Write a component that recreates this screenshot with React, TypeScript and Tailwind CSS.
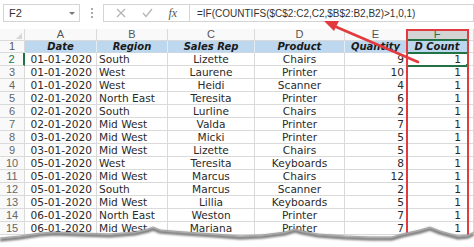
import React from "react";

const rows: [string, string, string, string, string, number, number][] = [
  ["2", "01-01-2020", "South", "Lizette", "Chairs", 9, 1],
  ["3", "01-01-2020", "West", "Laurene", "Printer", 10, 1],
  ["4", "01-01-2020", "West", "Heidi", "Scanner", 4, 1],
  ["5", "02-01-2020", "North East", "Teresita", "Printer", 6, 1],
  ["6", "02-01-2020", "South", "Lurline", "Chairs", 2, 1],
  ["7", "02-01-2020", "Mid West", "Valda", "Printer", 7, 1],
  ["8", "03-01-2020", "Mid West", "Micki", "Printer", 5, 1],
  ["9", "03-01-2020", "Mid West", "Lizette", "Chairs", 5, 1],
  ["10", "05-01-2020", "West", "Teresita", "Keyboards", 8, 1],
  ["11", "05-01-2020", "Mid West", "Marcus", "Chairs", 12, 1],
  ["12", "05-01-2020", "South", "Marcus", "Scanner", 2, 1],
  ["13", "05-01-2020", "Mid West", "Lillia", "Keyboards", 5, 1],
  ["14", "06-01-2020", "North East", "Weston", "Printer", 7, 1],
  ["15", "06-01-2020", "Mid West", "Mariana", "Printer", 7, 1],
];

const gridCols = "grid grid-cols-[25px_72px_71px_87px_90px_62px_61px_6px]";
const cell = "border-r border-b border-[#dadada] flex items-center whitespace-nowrap overflow-hidden";

const edge =
  "M0 238 L20 236 L40 233 L55 232 L80 233 L110 234 L135 232 L148 229 L153 227 L160 230 L185 232 L215 234 L240 236 L262 235 L285 232 L295 229 L302 231 L318 234 L345 236 L370 237 L392 237 L402 234 L420 230 L430 227 L440 231 L458 236 L468 235 L474 232";

export default function App() {
  return (
    <div className="relative w-[474px] h-[247px] overflow-hidden bg-white text-[#2a2a2a] font-['DejaVu_Sans',sans-serif]">
      {/* formula bar */}
      <div className="flex items-start h-[29px] pt-[4px] font-['Liberation_Sans',Arial,sans-serif]">
        <div className="ml-[3px] w-[77px] h-[18px] border border-[#d4d4d4] flex items-center justify-between pl-[5px] pr-[4px] text-[11px] text-[#333]">
          <span>F2</span>
          <span className="w-0 h-0 border-l-[3px] border-r-[3px] border-t-[3px] border-l-transparent border-r-transparent border-t-[#777]" />
        </div>
        <div className="w-[23px] h-[18px] flex flex-col items-center justify-center gap-[2px]">
          <span className="w-[2px] h-[2px] bg-[#aaa]" />
          <span className="w-[2px] h-[2px] bg-[#aaa]" />
          <span className="w-[2px] h-[2px] bg-[#aaa]" />
        </div>
        <div className="w-[87px] h-[18px] border border-[#d4d4d4] flex items-center justify-around px-[4px]">
          <svg width="10" height="10" viewBox="0 0 10 10">
            <path d="M1 1 L9 9 M9 1 L1 9" stroke="#b5b5b5" strokeWidth="1.3" />
          </svg>
          <svg width="11" height="10" viewBox="0 0 11 10">
            <path d="M1 5 L4 8.5 L10 1" stroke="#b5b5b5" strokeWidth="1.3" fill="none" />
          </svg>
          <span className="text-[12px] italic text-[#555] font-['Liberation_Serif',serif]">fx</span>
        </div>
        <div className="flex-1 h-[18px] border border-l-0 border-[#d4d4d4] flex items-center pl-[7px] text-[10px] text-[#333]">
          =IF(COUNTIFS($C$2:C2,C2,$B$2:B2,B2)&gt;1,0,1)
        </div>
      </div>

      {/* column headers */}
      <div className={`${gridCols} h-[12px] text-[11px] text-[#555] font-['Liberation_Sans',Arial,sans-serif] leading-none`}>
        <div className={`${cell} bg-[#f9f9f9] justify-end items-end pr-[2px] pb-[1px]`}>
          <span className="w-0 h-0 border-l-[6px] border-t-[6px] border-l-transparent border-t-transparent border-b-0 border-r-0 [border-right:6px_solid_#d6d6d6]" />
        </div>
        {["A", "B", "C", "D", "E"].map((c) => (
          <div key={c} className={`${cell} bg-[#f9f9f9] justify-center`}>{c}</div>
        ))}
        <div className={`${cell} bg-[#d4d4d4] justify-center text-[#217346] border-b-2 border-b-[#217346]`}>F</div>
        <div className={`${cell} bg-[#f9f9f9]`} />
      </div>

      {/* row 1 headers */}
      <div className={`${gridCols} h-[12px] text-[10px] font-bold italic leading-none`}>
        <div className={`${cell} bg-[#f9f9f9] justify-center not-italic font-normal text-[11px] text-[#555] font-['Liberation_Sans',Arial,sans-serif]`}>1</div>
        {["Date", "Region", "Sales Rep", "Product", "Quantity", "D Count"].map((h) => (
          <div key={h} className={`${cell} bg-[#bdd7ee] border-[#e4edf6] border-b-[#c9d6e3] justify-center text-[#1a1a1a]`}>{h}</div>
        ))}
        <div className={cell} />
      </div>

      {/* data rows */}
      {rows.map((r, i) => (
        <div key={r[0]} className={`${gridCols} h-[13px] text-[10.6px] leading-none`}>
          <div
            className={`${cell} bg-[#f9f9f9] justify-center text-[11px] font-['Liberation_Sans',Arial,sans-serif] ${
              i === 0 ? "text-[#217346] bg-[#e2e2e2] border-r-2 border-r-[#217346]" : "text-[#666]"
            }`}
          >
            {r[0]}
          </div>
          <div className={`${cell} justify-end pr-[4px]`}>{r[1]}</div>
          <div className={`${cell} pl-[2px]`}>{r[2]}</div>
          <div className={`${cell} justify-center`}>{r[3]}</div>
          <div className={`${cell} justify-center`}>{r[4]}</div>
          <div className={`${cell} justify-end pr-[2px]`}>{r[5]}</div>
          <div className={`${cell} justify-end pr-[6px] ${i === 0 ? "relative outline-2 outline-[#217346] -outline-offset-1" : ""}`}>
            {r[6]}
            {i === 0 && <span className="absolute right-[-2px] bottom-[-2px] w-[4px] h-[4px] bg-[#217346] border border-white" />}
          </div>
          <div className={cell} />
        </div>
      ))}

      {/* red highlight around column F */}
      <div className="absolute left-[406px] top-[29px] w-[63px] h-[212px] border-2 border-[#e23b3f] pointer-events-none" />

      {/* arrow + torn edge */}
      <svg className="absolute inset-0 pointer-events-none" width="474" height="247" viewBox="0 0 474 247">
        <defs>
          <filter id="blur" x="-5%" y="-50%" width="110%" height="200%">
            <feGaussianBlur stdDeviation="1.3" />
          </filter>
        </defs>
        <line x1="418" y1="62" x2="334" y2="26" stroke="#e23b3f" strokeWidth="2.6" strokeLinecap="round" />
        <polygon points="324,21 339,21 334,31" fill="#e23b3f" />
        <path d={`${edge} L474 247 L0 247 Z`} fill="#ffffff" />
        <path d={edge} transform="translate(0 2)" stroke="#6f6f6f" strokeWidth="3" fill="none" filter="url(#blur)" />
        <path d={edge} stroke="#9a9a9a" strokeWidth="0.8" fill="none" />
      </svg>
    </div>
  );
}
